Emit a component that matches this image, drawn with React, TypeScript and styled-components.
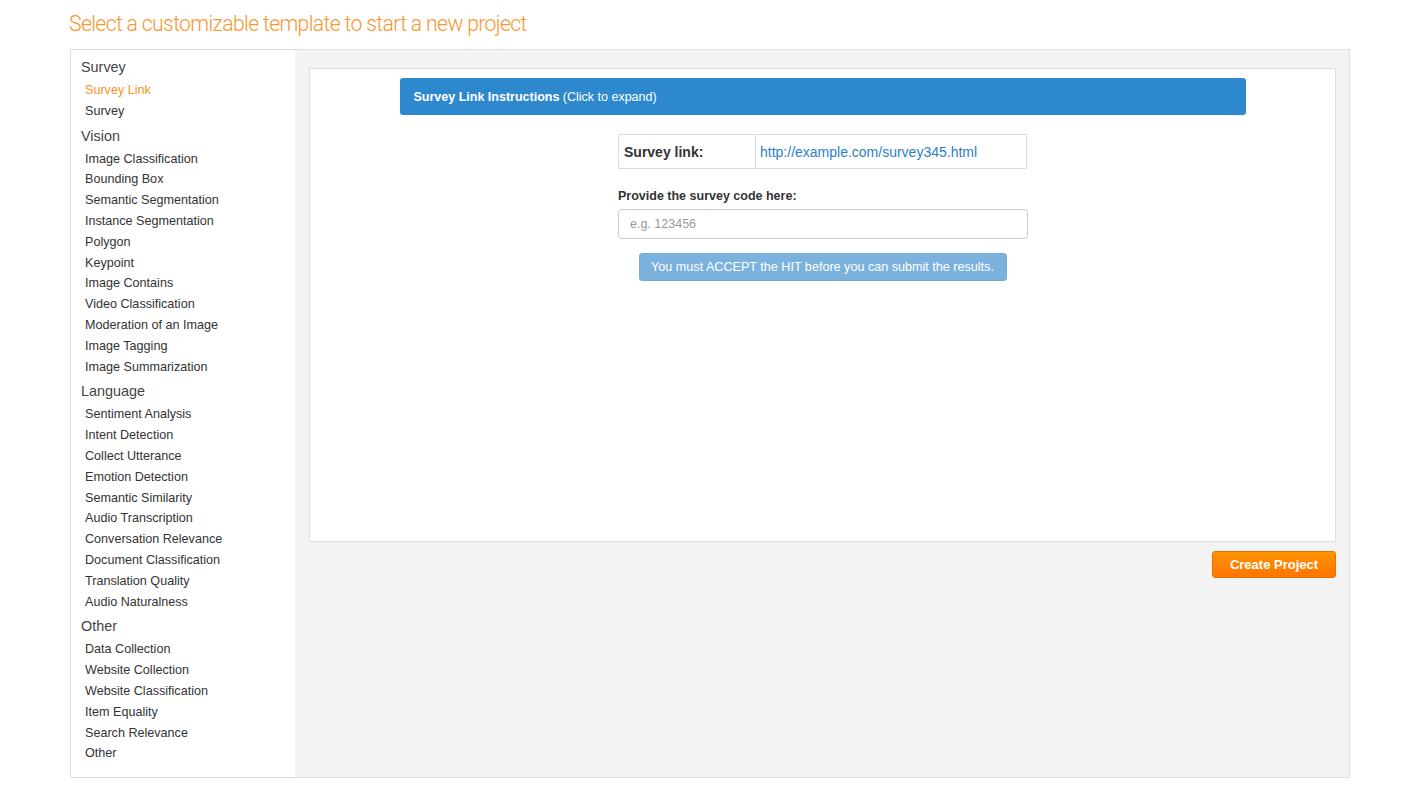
import React from 'react';
import styled, { createGlobalStyle } from 'styled-components';

const GlobalStyle = createGlobalStyle`
  html, body {
    margin: 0;
    padding: 0;
    background: #ffffff;
    font-family: 'Liberation Sans', Arial, Helvetica, sans-serif;
    color: #333;
  }
  * {
    box-sizing: border-box;
  }
`;

const Page = styled.div`
  width: 1280px;
  margin-left: 70px;
  padding-bottom: 15px;
`;

const Title = styled.h1`
  margin: 0 0 0 -1px;
  padding-top: 10px;
  height: 49px;
  font-family: Roboto, 'Liberation Sans', Arial, sans-serif;
  font-weight: 300;
  font-size: 21.2px;
  line-height: 27px;
  letter-spacing: -0.65px;
  color: #f7962f;
`;

const Frame = styled.div`
  display: flex;
  border: 1px solid #dcdfe3;
  background: #f3f3f3;
`;

const Sidebar = styled.nav`
  width: 224px;
  flex-shrink: 0;
  background: #ffffff;
  padding: 5px 0 12.8px 10px;
`;

const Group = styled.div`
  & + & {
    margin-top: 2px;
  }
`;

const GroupTitle = styled.div`
  font-size: 14.4px;
  line-height: 25px;
  color: #444;
`;

const Item = styled.div<{ $active?: boolean }>`
  padding-left: 4px;
  font-size: 12.6px;
  line-height: 20.8px;
  color: ${(p) => (p.$active ? '#f7931e' : '#333')};
  cursor: pointer;
`;

const Main = styled.main`
  flex: 1;
  display: flex;
  flex-direction: column;
  padding: 18px 13px 0 14px;
`;

const Panel = styled.section`
  height: 474px;
  background: #ffffff;
  border: 1px solid #dcdfe3;
  padding: 9px 0 0;
  display: flex;
  flex-direction: column;
  align-items: center;
`;

const InstructionsBar = styled.div`
  width: 846px;
  height: 37px;
  background: #2e88cd;
  border-radius: 3px;
  color: #ffffff;
  font-size: 12.5px;
  line-height: 38px;
  padding-left: 14px;
  cursor: pointer;

  b {
    font-weight: bold;
  }
`;

const Form = styled.div`
  width: 409px;
  margin-top: 19px;
  display: flex;
  flex-direction: column;
`;

const LinkTable = styled.table`
  width: 409px;
  border-collapse: collapse;

  td {
    border: 1px solid #dddddd;
    height: 34px;
    font-size: 14px;
    vertical-align: middle;
  }
`;

const LabelCell = styled.td`
  width: 137px;
  padding-left: 5px;
  font-weight: bold;
  color: #333;
`;

const LinkCell = styled.td`
  padding-left: 4px;

  a {
    color: #2a7fc9;
    text-decoration: none;
  }
`;

const FieldLabel = styled.label`
  margin-top: 19px;
  font-size: 12.5px;
  font-weight: bold;
  line-height: 16px;
  color: #333;
`;

const CodeInput = styled.input`
  margin-top: 5px;
  width: 410px;
  height: 30px;
  border: 1px solid #cccccc;
  border-radius: 4px;
  padding: 0 11px;
  font-family: 'Liberation Sans', Arial, sans-serif;
  font-size: 12.5px;
  color: #555;
  outline: none;

  &::placeholder {
    color: #999;
  }
`;

const SubmitButton = styled.button`
  margin: 14px auto 0;
  width: 368px;
  height: 28px;
  background: #7bb2dd;
  border: 1px solid #74acd9;
  border-radius: 3px;
  color: #ffffff;
  font-family: 'Liberation Sans', Arial, sans-serif;
  font-size: 12.6px;
  cursor: not-allowed;
`;

const Footer = styled.div`
  display: flex;
  justify-content: flex-end;
  padding-top: 9px;
`;

const CreateButton = styled.button`
  width: 124px;
  height: 27px;
  border: 1px solid #ec7100;
  border-radius: 3px;
  background: linear-gradient(#ff9300, #ff7500);
  color: #ffffff;
  font-family: 'Liberation Sans', Arial, sans-serif;
  font-weight: bold;
  font-size: 13px;
  cursor: pointer;
`;

const groups: { title: string; items: string[] }[] = [
  { title: 'Survey', items: ['Survey Link', 'Survey'] },
  {
    title: 'Vision',
    items: [
      'Image Classification',
      'Bounding Box',
      'Semantic Segmentation',
      'Instance Segmentation',
      'Polygon',
      'Keypoint',
      'Image Contains',
      'Video Classification',
      'Moderation of an Image',
      'Image Tagging',
      'Image Summarization',
    ],
  },
  {
    title: 'Language',
    items: [
      'Sentiment Analysis',
      'Intent Detection',
      'Collect Utterance',
      'Emotion Detection',
      'Semantic Similarity',
      'Audio Transcription',
      'Conversation Relevance',
      'Document Classification',
      'Translation Quality',
      'Audio Naturalness',
    ],
  },
  {
    title: 'Other',
    items: [
      'Data Collection',
      'Website Collection',
      'Website Classification',
      'Item Equality',
      'Search Relevance',
      'Other',
    ],
  },
];

const App = () => {
  return (
    <Page>
      <GlobalStyle />
      <Title>Select a customizable template to start a new project</Title>
      <Frame>
        <Sidebar>
          {groups.map((g) => (
            <Group key={g.title}>
              <GroupTitle>{g.title}</GroupTitle>
              {g.items.map((item) => (
                <Item key={item} $active={g.title === 'Survey' && item === 'Survey Link'}>
                  {item}
                </Item>
              ))}
            </Group>
          ))}
        </Sidebar>
        <Main>
          <Panel>
            <InstructionsBar>
              <b>Survey Link Instructions</b> (Click to expand)
            </InstructionsBar>
            <Form>
              <LinkTable>
                <tbody>
                  <tr>
                    <LabelCell>Survey link:</LabelCell>
                    <LinkCell>
                      <a href="#">http://example.com/survey345.html</a>
                    </LinkCell>
                  </tr>
                </tbody>
              </LinkTable>
              <FieldLabel>Provide the survey code here:</FieldLabel>
              <CodeInput placeholder="e.g. 123456" />
              <SubmitButton disabled>You must ACCEPT the HIT before you can submit the results.</SubmitButton>
            </Form>
          </Panel>
          <Footer>
            <CreateButton>Create Project</CreateButton>
          </Footer>
        </Main>
      </Frame>
    </Page>
  );
};

export default App;
